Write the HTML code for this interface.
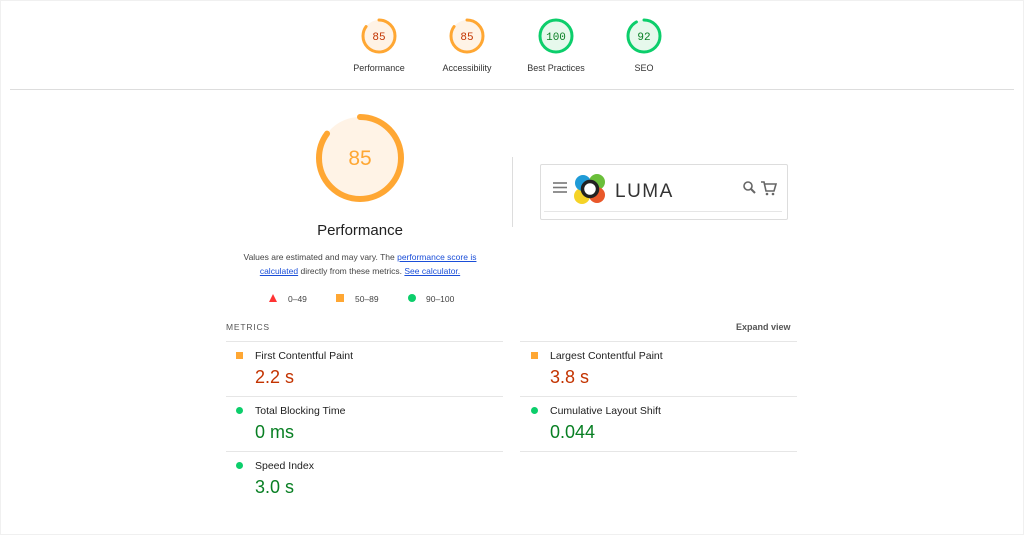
<!DOCTYPE html>
<html><head><meta charset="utf-8"><style>
body{margin:0;width:1024px;height:535px;background:#fff;font-family:"Liberation Sans",Arial,sans-serif;position:relative;overflow:hidden;color:#212121}
.a{position:absolute}
.lbl{font-size:9px;color:#333;text-align:center;width:100px}
.mt{font-size:10.5px;color:#212121}
.mv{font-size:18px}
.hl{position:absolute;height:1px;background:#e6e6e6}
a{color:#1a4ed8}
</style></head><body>
<div class="a" style="left:0;top:0;width:1022px;height:533px;border:1px solid #f0f0f0"></div>
<svg class="a" style="left:0;top:0" width="1024" height="240">
<g font-family="Liberation Mono,monospace" font-size="11" text-anchor="middle">
<circle cx="379" cy="36" r="16" fill="#fff3e6"/>
<circle cx="379" cy="36" r="16" fill="none" stroke="#ffa733" stroke-width="3" stroke-dasharray="85.4 100.5" transform="rotate(-90 379 36)" stroke-linecap="round"/>
<text x="379" y="40" fill="#c33300">85</text>
<circle cx="467" cy="36" r="16" fill="#fff3e6"/>
<circle cx="467" cy="36" r="16" fill="none" stroke="#ffa733" stroke-width="3" stroke-dasharray="85.4 100.5" transform="rotate(-90 467 36)" stroke-linecap="round"/>
<text x="467" y="40" fill="#c33300">85</text>
<circle cx="556" cy="36" r="16" fill="#e6f9ec" stroke="#0cce6b" stroke-width="3"/>
<text x="556" y="40" fill="#087f23">100</text>
<circle cx="644" cy="36" r="16" fill="#e6f9ec"/>
<circle cx="644" cy="36" r="16" fill="none" stroke="#0cce6b" stroke-width="3" stroke-dasharray="92.5 100.5" transform="rotate(-90 644 36)" stroke-linecap="round"/>
<text x="644" y="40" fill="#087f23">92</text>
</g>
<circle cx="360" cy="158" r="41" fill="#fff3e6"/>
<circle cx="360" cy="158" r="41" fill="none" stroke="#ffa733" stroke-width="6" stroke-dasharray="219 257.6" transform="rotate(-90 360 158)" stroke-linecap="round"/>
<text x="360" y="165" text-anchor="middle" font-family="Liberation Sans,sans-serif" font-size="21" fill="#ffa733">85</text>
</svg>
<div class="a lbl" style="left:329px;top:63px">Performance</div>
<div class="a lbl" style="left:417px;top:63px">Accessibility</div>
<div class="a lbl" style="left:506px;top:63px">Best Practices</div>
<div class="a lbl" style="left:594px;top:63px">SEO</div>
<div class="hl" style="left:10px;top:89px;width:1004px;background:#ddd"></div>
<div class="a" style="left:260px;top:222px;width:200px;text-align:center;font-size:15px;color:#212121">Performance</div>
<div class="a" style="left:226px;top:250px;width:268px;text-align:center;font-size:8.5px;line-height:14px;color:#444">Values are estimated and may vary. The <a href="#">performance score is calculated</a> directly from these metrics. <a href="#">See calculator.</a></div>
<svg class="a" style="left:268px;top:293px" width="10" height="10"><polygon points="5,1 9,9 1,9" fill="#f33"/></svg>
<div class="a" style="left:288px;top:294px;font-size:8.5px;color:#444">0–49</div>
<div class="a" style="left:336px;top:294px;width:8px;height:8px;background:#ffa733"></div>
<div class="a" style="left:355px;top:294px;font-size:8.5px;color:#444">50–89</div>
<div class="a" style="left:408px;top:294px;width:8px;height:8px;border-radius:50%;background:#0cce6b"></div>
<div class="a" style="left:426px;top:294px;font-size:8.5px;color:#444">90–100</div>
<div class="a" style="left:512px;top:157px;width:1px;height:70px;background:#ddd"></div>
<div class="a" style="left:540px;top:164px;width:246px;height:54px;border:1px solid #ddd;border-radius:2px;background:#fff"></div>
<div class="hl" style="left:544px;top:211px;width:238px"></div>
<svg class="a" style="left:552px;top:172px" width="230" height="36">
<g stroke="#777" stroke-width="1.6"><line x1="1" y1="11" x2="15" y2="11"/><line x1="1" y1="15.5" x2="15" y2="15.5"/><line x1="1" y1="20" x2="15" y2="20"/></g>
<circle cx="45" cy="10" r="8" fill="#6abf3a"/><circle cx="30" cy="24" r="8" fill="#f5d327"/><circle cx="45" cy="23" r="8" fill="#e9582a"/><circle cx="31" cy="11" r="8" fill="#1f9bd7"/>
<circle cx="38" cy="17" r="7.5" fill="#fff" stroke="#222" stroke-width="3.5"/>
<text x="63" y="25" font-family="Liberation Sans,sans-serif" font-size="19" letter-spacing="1.5" fill="#333">LUMA</text>
<circle cx="196" cy="14" r="4" fill="none" stroke="#666" stroke-width="1.6"/><line x1="199" y1="17" x2="203" y2="21" stroke="#666" stroke-width="2"/>
<path d="M209 10h3l2 9h8l2-7h-11" fill="none" stroke="#666" stroke-width="1.6"/><circle cx="215" cy="22" r="1.3" fill="#666"/><circle cx="221" cy="22" r="1.3" fill="#666"/>
</svg>
<div class="a" style="left:226px;top:322px;font-size:8.5px;letter-spacing:.8px;color:#555">METRICS</div>
<div class="a" style="left:736px;top:322px;font-size:9px;font-weight:bold;color:#555">Expand view</div>
<div class="hl" style="left:226px;top:341px;width:277px"></div>
<div class="hl" style="left:520px;top:341px;width:277px"></div>
<div class="hl" style="left:226px;top:396px;width:277px"></div>
<div class="hl" style="left:520px;top:396px;width:277px"></div>
<div class="hl" style="left:226px;top:451px;width:277px"></div>
<div class="hl" style="left:520px;top:451px;width:277px"></div>
<div class="a" style="left:236px;top:352px;width:7px;height:7px;background:#ffa733"></div>
<div class="a mt" style="left:255px;top:350px">First Contentful Paint</div>
<div class="a mv" style="left:255px;top:367px;color:#c33300">2.2 s</div>
<div class="a" style="left:531px;top:352px;width:7px;height:7px;background:#ffa733"></div>
<div class="a mt" style="left:550px;top:350px">Largest Contentful Paint</div>
<div class="a mv" style="left:550px;top:367px;color:#c33300">3.8 s</div>
<div class="a" style="left:236px;top:407px;width:7px;height:7px;border-radius:50%;background:#0cce6b"></div>
<div class="a mt" style="left:255px;top:405px">Total Blocking Time</div>
<div class="a mv" style="left:255px;top:422px;color:#087f23">0 ms</div>
<div class="a" style="left:531px;top:407px;width:7px;height:7px;border-radius:50%;background:#0cce6b"></div>
<div class="a mt" style="left:550px;top:405px">Cumulative Layout Shift</div>
<div class="a mv" style="left:550px;top:422px;color:#087f23">0.044</div>
<div class="a" style="left:236px;top:462px;width:7px;height:7px;border-radius:50%;background:#0cce6b"></div>
<div class="a mt" style="left:255px;top:460px">Speed Index</div>
<div class="a mv" style="left:255px;top:477px;color:#087f23">3.0 s</div>
</body></html>
